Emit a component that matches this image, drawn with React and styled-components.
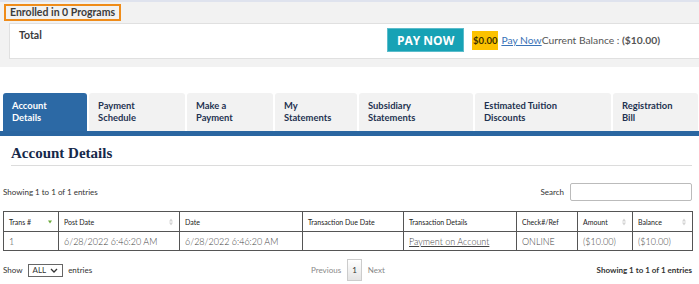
import React from 'react'
import styled, { createGlobalStyle } from 'styled-components'

const Global = createGlobalStyle`
  body {
    margin: 0;
    background: #fff;
    font-family: Lato, "Open Sans", "Liberation Sans", sans-serif;
    overflow: hidden;
  }
`

const Page = styled.div`
  width: 699px;
  height: 284px;
  overflow: hidden;
`

const TopPanel = styled.div`
  background: #f2f2f2;
  border-top: 2px solid #dfe3ee;
  height: 67px;
  padding: 2px 0 0 4px;
  box-sizing: border-box;
`

const Enrolled = styled.div`
  width: fit-content;
  border: 2px solid #ef8c1a;
  padding: 0 4px 0 4px;
  font-size: 10.5px;
  font-weight: 700;
  color: #3c3c3c;
  line-height: 13px;
`

const Card = styled.div`
  margin: 2px -20px 0 5px;
  height: 34px;
  background: #fff;
  border: 1px solid #e0e0e0;
  display: flex;
  align-items: flex-start;
  justify-content: space-between;
  padding: 0 58px 0 9px;
`

const Total = styled.div`
  font-size: 10.5px;
  font-weight: 700;
  color: #3a3a3a;
  margin-top: 5px;
`

const PayRow = styled.div`
  display: flex;
  align-items: center;
  margin-top: 4px;
  font-size: 10.3px;
  color: #555;
`

const PayButton = styled.button`
  width: 77px;
  height: 24px;
  border: 1px solid #5bbccb;
  background: #17a2b5;
  color: #fff;
  font-family: "Open Sans", sans-serif;
  font-size: 12px;
  font-weight: 700;
  margin-right: 8px;
  padding: 0;
`

const Due = styled.span`
  background: #fcc200;
  color: #3a3000;
  font-size: 9.5px;
  font-weight: 700;
  padding: 4px 1px;
  margin-right: 3px;
`

const PayLink = styled.a`
  color: #3a73b8;
  text-decoration: underline;
`

const Tabs = styled.div`
  display: flex;
  gap: 2px;
  margin-top: 26px;
  padding-left: 3px;
  height: 38px;
`

const Tab = styled.div`
  width: ${p => p.w}px;
  box-sizing: border-box;
  padding: 7px 0 0 9px;
  background: ${p => (p.active ? '#2c69a5' : '#f2f2f2')};
  color: ${p => (p.active ? '#fff' : '#1f3251')};
  border-radius: 3px 3px 0 0;
  font-size: 9.4px;
  font-weight: 700;
  line-height: 12px;
`

const TabBar = styled.div`
  height: 5px;
  background: #2a66a1;
`

const Content = styled.div`
  padding: 0 7px 0 3px;
`

const Heading = styled.h2`
  margin: 9px 0 0 8px;
  font-family: "Liberation Serif", serif;
  font-weight: 700;
  font-size: 15px;
  color: #16294a;
  padding-bottom: 4px;
  border-bottom: 1px solid #dcdcdc;
  line-height: 16px;
`

const Toolbar = styled.div`
  display: flex;
  justify-content: space-between;
  align-items: center;
  margin-top: 16px;
  height: 20px;
  font-size: 8px;
  color: #333;
`

const SearchLabel = styled.label`
  display: flex;
  align-items: center;
  gap: 6px;
`

const SearchInput = styled.input`
  width: 120px;
  height: 16px;
  border: 1px solid #bbb;
  border-radius: 2px;
  padding: 0;
`

const Table = styled.table`
  margin-top: 9px;
  border-collapse: collapse;
  table-layout: fixed;
  width: 689px;
  color: #333;
`

const Th = styled.th`
  position: relative;
  border: 1px solid #555;
  height: 19px;
  padding: 0 5px;
  text-align: left;
  font-weight: 400;
  font-size: 7px;
  color: #222;
`

const Td = styled.td`
  border: 1px solid #555;
  height: 18px;
  padding: 0 5px;
  font-size: 9px;
  font-weight: 300;
  color: #444;
  text-decoration: ${p => (p.link ? 'underline' : 'none')};
`

const Sort = styled.span`
  position: absolute;
  right: 6px;
  top: 50%;
  transform: translateY(-50%);
  display: flex;
  flex-direction: column;
  gap: 1px;
`

const Arrow = styled.span`
  width: 0;
  height: 0;
  border-left: 2.5px solid transparent;
  border-right: 2.5px solid transparent;
  ${p => (p.up ? 'border-bottom' : 'border-top')}: 3px solid ${p => p.color};
`

const Footer = styled.div`
  display: flex;
  justify-content: space-between;
  align-items: center;
  margin-top: 8px;
  font-size: 8px;
  color: #333;
`

const Show = styled.div`
  display: flex;
  align-items: center;
  gap: 5px;
  width: 230px;
`

const Select = styled.div`
  display: flex;
  align-items: center;
  gap: 4px;
  border: 1px solid #666;
  padding: 0 4px;
  height: 11px;
  font-size: 8px;
`

const Pager = styled.div`
  display: flex;
  align-items: center;
  gap: 6px;
  color: #888;
  margin-left: 78px;
`

const PageBtn = styled.span`
  border: 1px solid #ccc;
  background: linear-gradient(#fff, #e4e4e4);
  color: #333;
  padding: 5px 4px;
`

const Info = styled.div`
  flex: 1;
  text-align: right;
  font-weight: 700;
`

const cols = [
  ['Trans #', 55, 'green'],
  ['Post Date', 121, 'sort'],
  ['Date', 123],
  ['Transaction Due Date', 101],
  ['Transaction Details', 113],
  ['Check#/Ref', 61],
  ['Amount', 55, 'sort'],
  ['Balance', 60, 'sort'],
]

const tabs = [
  ['Account Details', 84, true],
  ['Payment Schedule', 96],
  ['Make a Payment', 86],
  ['My Statements', 82],
  ['Subsidiary Statements', 114],
  ['Estimated Tuition Discounts', 136],
  ['Registration Bill', 85],
]

function SortIcon({ kind }) {
  if (kind === 'green') {
    return (
      <Sort>
        <Arrow color="#6aa83a" />
      </Sort>
    )
  }
  return (
    <Sort>
      <Arrow up color="#d4d4d4" />
      <Arrow color="#d4d4d4" />
    </Sort>
  )
}

export default function App() {
  return (
    <Page>
      <Global />
      <TopPanel>
        <Enrolled>Enrolled in 0 Programs</Enrolled>
        <Card>
          <Total>Total</Total>
          <PayRow>
            <PayButton>PAY NOW</PayButton>
            <Due>$0.00</Due>
            <PayLink href="#">Pay Now</PayLink>
            <span>Current Balance : <b>($10.00)</b></span>
          </PayRow>
        </Card>
      </TopPanel>

      <Tabs>
        {tabs.map(([label, w, active]) => {
          const words = label.split(' ')
          const first = words.length > 2 ? words.slice(0, 2).join(' ') : words[0]
          const rest = words.length > 2 ? words.slice(2).join(' ') : words.slice(1).join(' ')
          return (
            <Tab key={label} w={w} active={active}>
              {first}
              <br />
              {rest}
            </Tab>
          )
        })}
      </Tabs>
      <TabBar />

      <Content>
        <Heading>Account Details</Heading>
        <Toolbar>
          <span>Showing 1 to 1 of 1 entries</span>
          <SearchLabel>
            Search
            <SearchInput />
          </SearchLabel>
        </Toolbar>
        <Table>
          <colgroup>
            {cols.map(([l, w]) => (
              <col key={l} style={{ width: w }} />
            ))}
          </colgroup>
          <thead>
            <tr>
              {cols.map(([l, , s]) => (
                <Th key={l}>
                  {l}
                  {s && <SortIcon kind={s} />}
                </Th>
              ))}
            </tr>
          </thead>
          <tbody>
            <tr>
              <Td>1</Td>
              <Td>6/28/2022 6:46:20 AM</Td>
              <Td>6/28/2022 6:46:20 AM</Td>
              <Td></Td>
              <Td link>Payment on Account</Td>
              <Td>ONLINE</Td>
              <Td>($10.00)</Td>
              <Td>($10.00)</Td>
            </tr>
          </tbody>
        </Table>
        <Footer>
          <Show>
            Show
            <Select>
              ALL
              <svg width="8" height="5" viewBox="0 0 8 5">
                <path d="M1 1l3 3 3-3" fill="none" stroke="#333" strokeWidth="1.3" />
              </svg>
            </Select>
            entries
          </Show>
          <Pager>
            Previous
            <PageBtn>1</PageBtn>
            Next
          </Pager>
          <Info>Showing 1 to 1 of 1 entries</Info>
        </Footer>
      </Content>
    </Page>
  )
}
